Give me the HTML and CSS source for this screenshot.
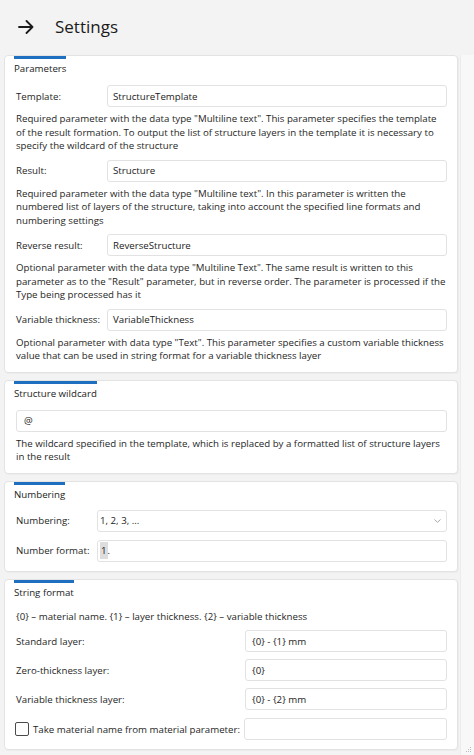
FILE: index.html
```html
<!DOCTYPE html>
<html lang="en">
<head>
<meta charset="utf-8">
<title>Settings</title>
<link rel="stylesheet" href="styles.css">
</head>
<body>
<div class="window">
  <header class="titlebar">
    <svg class="back" width="16" height="14" viewBox="0 0 16 14" aria-hidden="true">
      <path d="M1 7 H14.5 M8.5 1 L14.5 7 L8.5 13" fill="none" stroke="#1b1b1b" stroke-width="1.8" stroke-linecap="round" stroke-linejoin="round"/>
    </svg>
    <h1 class="title">Settings</h1>
  </header>
  <div class="content">
    <div class="cards">
      <section class="card">
        <div class="card-title">Parameters</div>
        <div class="card-body params">
          <div class="field"><span class="label w91">Template:</span><div class="input pad6">StructureTemplate</div></div>
          <p class="desc">Required parameter with the data type "Multiline text". This parameter specifies the template of the result formation. To output the list of structure layers in the template it is necessary to specify the wildcard of the structure</p>
          <div class="field"><span class="label w91">Result:</span><div class="input pad6">Structure</div></div>
          <p class="desc">Required parameter with the data type "Multiline text". In this parameter is written the numbered list of layers of the structure, taking into account the specified line formats and numbering settings</p>
          <div class="field"><span class="label w91">Reverse result:</span><div class="input pad6">ReverseStructure</div></div>
          <p class="desc">Optional parameter with the data type "Multiline Text". The same result is written to this parameter as to the "Result" parameter, but in reverse order. The parameter is processed if the Type being processed has it</p>
          <div class="field"><span class="label w91">Variable thickness:</span><div class="input pad6">VariableThickness</div></div>
          <p class="desc">Optional parameter with data type "Text". This parameter specifies a custom variable thickness value that can be used in string format for a variable thickness layer</p>
        </div>
      </section>

      <section class="card">
        <div class="card-title">Structure wildcard</div>
        <div class="card-body params">
          <div class="field"><div class="input pad8">@</div></div>
          <p class="desc">The wildcard specified in the template, which is replaced by a formatted list of structure layers in the result</p>
        </div>
      </section>

      <section class="card">
        <div class="card-title">Numbering</div>
        <div class="card-body rows numbering">
          <div class="field"><span class="label w81">Numbering:</span><div class="input pad3 select"><span>1, 2, 3, ...</span><svg class="chev" width="7" height="4" viewBox="0 0 7 4" aria-hidden="true"><path d="M0.5 0.5 L3.5 3.3 L6.5 0.5" fill="none" stroke="#a8a8a8" stroke-width="1"/></svg></div></div>
          <div class="field"><span class="label w81">Number format:</span><div class="input pad3"><span class="sel">1</span>.</div></div>
        </div>
      </section>

      <section class="card">
        <div class="card-title">String format</div>
        <div class="card-body rows strings">
          <p class="desc hint">{0} – material name. {1} – layer thickness. {2} – variable thickness</p>
          <div class="field"><span class="label w229">Standard layer:</span><div class="input pad7">{0} - {1} mm</div></div>
          <div class="field"><span class="label w229">Zero-thickness layer:</span><div class="input pad7">{0}</div></div>
          <div class="field"><span class="label w229">Variable thickness layer:</span><div class="input pad7">{0} - {2} mm</div></div>
          <div class="field check-row"><span class="label w229 check-label"><span class="checkbox"></span>Take material name from material parameter:</span><div class="input pad7"></div></div>
        </div>
      </section>
    </div>
    <div class="track">
      <svg class="grip" width="6" height="6" viewBox="0 0 6 6" aria-hidden="true">
        <rect x="4" y="0" width="1" height="1" fill="#bdbdbd"/>
        <rect x="2" y="2" width="1" height="1" fill="#bdbdbd"/>
        <rect x="4" y="2" width="1" height="1" fill="#bdbdbd"/>
        <rect x="0" y="4" width="1" height="1" fill="#bdbdbd"/>
        <rect x="2" y="4" width="1" height="1" fill="#bdbdbd"/>
        <rect x="4" y="4" width="1" height="1" fill="#bdbdbd"/>
      </svg>
    </div>
  </div>
</div>
</body>
</html>
```

FILE: styles.css
```css
* { box-sizing: border-box; }

html, body {
  margin: 0;
  padding: 0;
}

body {
  background: #f3f3f3;
  font-family: "Open Sans", "Noto Sans", sans-serif;
  font-size: 9.7px;
  color: #1b1b1b;
  width: 474px;
  height: 755px;
  overflow: hidden;
}

.window {
  display: flex;
  flex-direction: column;
  height: 755px;
}

.titlebar {
  height: 55px;
  display: flex;
  align-items: center;
  padding-left: 18px;
  padding-bottom: 2px;
}

.back {
  display: block;
  flex: none;
}

.title {
  margin: 0 0 0 21px;
  font-size: 17px;
  font-weight: 400;
  line-height: 22px;
  color: #1b1b1b;
}

.content {
  flex: 1;
  display: flex;
  min-height: 0;
}

.cards {
  width: 458px;
  padding-left: 4px;
  display: flex;
  flex-direction: column;
  gap: 7px;
}

.track {
  flex: 1;
  margin-left: 2px;
  background: #f8f8f8;
  border-left: 1px solid #ececec;
  position: relative;
}

.grip {
  position: absolute;
  right: 2px;
  bottom: 2px;
}

.card {
  background: #ffffff;
  border: 1px solid #e3e3e3;
  border-radius: 4px;
  padding: 0 10px 9px 11px;
  box-shadow: 1px 1px 0 #ececec;
}

.card-title {
  display: inline-block;
  margin-left: -2px;
  border-top: 3px solid #1f6fc1;
  padding-top: 3px;
  line-height: 14px;
  color: #1b1b1b;
}

.card-body {
  display: flex;
  flex-direction: column;
}

.params { margin-top: 9px; }

.params .desc { margin: 5px 0 7px; }
.params .desc:last-child { margin-bottom: 0; }

.rows { gap: 8px; }
.numbering { margin-top: 8px; }
.strings { margin-top: 10px; gap: 7px; }
.strings .check-row { margin-top: 1px; }

.desc {
  margin: 0;
  line-height: 13.5px;
  color: #1f1f1f;
}

.field {
  display: flex;
  align-items: center;
  height: 22px;
}

.label {
  flex: none;
  color: #1f1f1f;
  white-space: nowrap;
}

.w91 { width: 91px; }
.w81 { width: 81px; }
.w229 { width: 229px; }

.input {
  flex: 1;
  height: 22px;
  border: 1px solid #e2e2e2;
  border-radius: 3px;
  background: #ffffff;
  display: flex;
  align-items: center;
  white-space: nowrap;
  color: #1b1b1b;
}

.pad3 { padding-left: 2px; }
.pad6 { padding-left: 5px; }
.pad7 { padding-left: 6px; }
.pad8 { padding-left: 7px; }

.select {
  justify-content: space-between;
  padding-right: 5px;
}

.chev { display: block; }

.sel {
  background: #dddddd;
  padding: 2px 1px 2px 1px;
  line-height: 13px;
}

.check-label {
  display: flex;
  align-items: center;
  gap: 4px;
  margin-left: -1px;
}

.checkbox {
  width: 14px;
  height: 14px;
  border: 1px solid #4a4a4a;
  border-radius: 2px;
  background: #ffffff;
  flex: none;
}
```
